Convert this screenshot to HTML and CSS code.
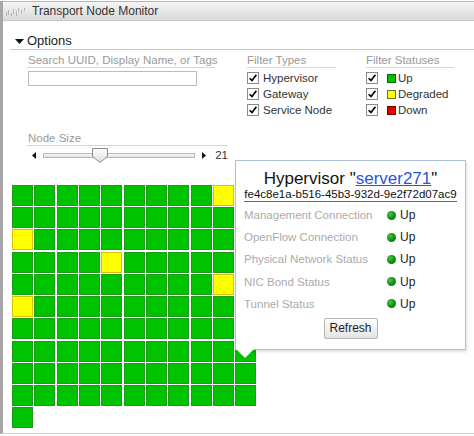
FILE: index.html
```html
<!DOCTYPE html>
<html>
<head>
<meta charset="utf-8">
<title>Transport Node Monitor</title>
<link rel="stylesheet" href="styles.css">
</head>
<body>
<div class="window">
  <div class="titlebar">
    <svg class="grip" width="22" height="10" viewBox="0 0 22 10">
      <g stroke="#b4b4b4" stroke-width="1">
        <line x1="1.5" y1="5" x2="1.5" y2="9"/>
        <line x1="3.5" y1="3" x2="3.5" y2="8"/>
        <line x1="6.5" y1="6" x2="6.5" y2="9"/>
        <line x1="8.5" y1="2" x2="8.5" y2="7"/>
        <line x1="11.5" y1="4" x2="11.5" y2="9"/>
        <line x1="13.5" y1="1" x2="13.5" y2="5"/>
        <line x1="16.5" y1="3" x2="16.5" y2="7"/>
        <line x1="19.5" y1="1" x2="19.5" y2="4"/>
      </g>
    </svg>
    <span class="title">Transport Node Monitor</span>
  </div>

  <div class="opt-head">
    <svg class="tri" width="9" height="5" viewBox="0 0 9 5"><polygon points="0,0 9,0 4.5,5" fill="#111"/></svg>
    <span>Options</span>
  </div>

  <div class="filters">
    <div class="col-search">
      <div class="label label-search">Search UUID, Display Name, or Tags</div>
      <input class="search-input" type="text">
    </div>
    <div class="col-types">
      <div class="label">Filter Types</div>
      <div class="checks">
        <div class="check-row"><span class="cb"><svg width="10" height="10" viewBox="0 0 10 10"><path d="M1.6 5.2 L4 7.6 L8.4 1.8" fill="none" stroke="#000" stroke-width="1.6"/></svg></span>Hypervisor</div>
        <div class="check-row"><span class="cb"><svg width="10" height="10" viewBox="0 0 10 10"><path d="M1.6 5.2 L4 7.6 L8.4 1.8" fill="none" stroke="#000" stroke-width="1.6"/></svg></span>Gateway</div>
        <div class="check-row"><span class="cb"><svg width="10" height="10" viewBox="0 0 10 10"><path d="M1.6 5.2 L4 7.6 L8.4 1.8" fill="none" stroke="#000" stroke-width="1.6"/></svg></span>Service Node</div>
      </div>
    </div>
    <div class="col-status">
      <div class="label">Filter Statuses</div>
      <div class="checks">
        <div class="check-row"><span class="cb cb-status"><svg width="10" height="10" viewBox="0 0 10 10"><path d="M1.6 5.2 L4 7.6 L8.4 1.8" fill="none" stroke="#000" stroke-width="1.6"/></svg></span><span class="sq sq-up"></span>Up</div>
        <div class="check-row"><span class="cb cb-status"><svg width="10" height="10" viewBox="0 0 10 10"><path d="M1.6 5.2 L4 7.6 L8.4 1.8" fill="none" stroke="#000" stroke-width="1.6"/></svg></span><span class="sq sq-deg"></span>Degraded</div>
        <div class="check-row"><span class="cb cb-status"><svg width="10" height="10" viewBox="0 0 10 10"><path d="M1.6 5.2 L4 7.6 L8.4 1.8" fill="none" stroke="#000" stroke-width="1.6"/></svg></span><span class="sq sq-down"></span>Down</div>
      </div>
    </div>
  </div>

  <div class="nodesize">
    <div class="label label-search">Node Size</div>
    <div class="slider">
      <svg class="arr-left" width="4" height="7" viewBox="0 0 4 7"><polygon points="4,0 4,7 0,3.5" fill="#111"/></svg>
      <div class="track">
        <svg class="thumb" width="16" height="15" viewBox="0 0 16 15">
          <defs><linearGradient id="tg" x1="0" y1="0" x2="0" y2="1"><stop offset="0" stop-color="#ffffff"/><stop offset="1" stop-color="#dcdcdc"/></linearGradient></defs>
          <polygon points="0.5,0.5 15.5,0.5 15.5,8.5 8,14.5 0.5,8.5" fill="url(#tg)" stroke="#8c8c8c"/>
        </svg>
      </div>
      <svg class="arr-right" width="4" height="7" viewBox="0 0 4 7"><polygon points="0,0 0,7 4,3.5" fill="#111"/></svg>
      <span class="size-val">21</span>
    </div>
  </div>

  <div class="grid">
    <i class="c"></i><i class="c"></i><i class="c"></i><i class="c"></i><i class="c"></i><i class="c"></i><i class="c"></i><i class="c"></i><i class="c"></i><i class="c y"></i><i class="c"></i>
    <i class="c"></i><i class="c"></i><i class="c"></i><i class="c"></i><i class="c"></i><i class="c"></i><i class="c"></i><i class="c"></i><i class="c"></i><i class="c"></i><i class="c"></i>
    <i class="c y"></i><i class="c"></i><i class="c"></i><i class="c"></i><i class="c"></i><i class="c"></i><i class="c"></i><i class="c"></i><i class="c"></i><i class="c"></i><i class="c"></i>
    <i class="c"></i><i class="c"></i><i class="c"></i><i class="c"></i><i class="c y"></i><i class="c"></i><i class="c"></i><i class="c"></i><i class="c"></i><i class="c"></i><i class="c"></i>
    <i class="c"></i><i class="c"></i><i class="c"></i><i class="c"></i><i class="c"></i><i class="c"></i><i class="c"></i><i class="c"></i><i class="c"></i><i class="c y"></i><i class="c"></i>
    <i class="c y"></i><i class="c"></i><i class="c"></i><i class="c"></i><i class="c"></i><i class="c"></i><i class="c"></i><i class="c"></i><i class="c"></i><i class="c"></i><i class="c"></i>
    <i class="c"></i><i class="c"></i><i class="c"></i><i class="c"></i><i class="c"></i><i class="c"></i><i class="c"></i><i class="c"></i><i class="c"></i><i class="c"></i><i class="c"></i>
    <i class="c"></i><i class="c"></i><i class="c"></i><i class="c"></i><i class="c"></i><i class="c"></i><i class="c"></i><i class="c"></i><i class="c"></i><i class="c"></i><i class="c"></i>
    <i class="c"></i><i class="c"></i><i class="c"></i><i class="c"></i><i class="c"></i><i class="c"></i><i class="c"></i><i class="c"></i><i class="c"></i><i class="c"></i><i class="c"></i>
    <i class="c"></i><i class="c"></i><i class="c"></i><i class="c"></i><i class="c"></i><i class="c"></i><i class="c"></i><i class="c"></i><i class="c"></i><i class="c"></i><i class="c"></i>
    <i class="c"></i>
  </div>
</div>

<div class="popup">
  <div class="pop-title">Hypervisor "<a href="#">server271</a>"</div>
  <div class="pop-uuid-wrap"><span class="pop-uuid">fe4c8e1a-b516-45b3-932d-9e2f72d07ac9</span></div>
  <div class="stat-rows">
    <div class="stat-row"><span class="stat-name">Management Connection</span><span class="dot"></span><span class="up">Up</span></div>
    <div class="stat-row"><span class="stat-name">OpenFlow Connection</span><span class="dot"></span><span class="up">Up</span></div>
    <div class="stat-row"><span class="stat-name">Physical Network Status</span><span class="dot"></span><span class="up">Up</span></div>
    <div class="stat-row"><span class="stat-name">NIC Bond Status</span><span class="dot"></span><span class="up">Up</span></div>
    <div class="stat-row"><span class="stat-name">Tunnel Status</span><span class="dot"></span><span class="up">Up</span></div>
  </div>
  <div class="refresh-wrap"><button class="refresh" type="button">Refresh</button></div>
</div>
</body>
</html>
```

FILE: styles.css
```css
html, body {
  margin: 0;
  padding: 0;
  background: #ffffff;
}
body {
  position: relative;
  font-family: "Liberation Sans", Arial, sans-serif;
  color: #222;
}

.window {
  margin-top: 1px;
  height: 433px;
  box-sizing: border-box;
  border-top: 1px solid #b5b5b5;
  border-left: 3px solid #a6a6a6;
  border-bottom: 1px solid #cdcdcd;
  overflow: hidden;
}

.titlebar {
  height: 17px;
  padding-top: 1px;
  border-bottom: 1px solid #c6c6c6;
  background: linear-gradient(#f5f5f5, #d9d9d9);
  display: flex;
  align-items: center;
  font-size: 12px;
  line-height: 17px;
  color: #333;
}
.grip {
  margin-left: 2px;
  display: block;
}
.title {
  margin-left: 5px;
}

.opt-head {
  margin: 12px 0 0 7px;
  height: 16px;
  line-height: 16px;
  border-bottom: 1px solid #c8c8c8;
  font-size: 13px;
  color: #222;
  display: flex;
  align-items: center;
}
.tri {
  margin-left: 5px;
  margin-right: 3px;
  display: block;
}

.filters {
  display: flex;
  margin: 4px 0 0 24px;
}
.col-search { width: 188px; }
.col-types { width: 89px; margin-left: 32px; }
.col-status { width: 88px; margin-left: 30px; }

.label {
  font-size: 11.5px;
  line-height: 13px;
  color: #9a9a9a;
  border-bottom: 1px solid #d6d6d6;
  white-space: nowrap;
}
.label-search { padding-left: 1px; }

.search-input {
  display: block;
  margin: 3px 0 0 1px;
  width: 169px;
  height: 15px;
  box-sizing: border-box;
  padding: 0;
  border: 1px solid #bcbcbc;
  background: #fff;
}

.checks { margin-top: 2px; }
.check-row {
  height: 16px;
  display: flex;
  align-items: center;
  font-size: 11.5px;
  color: #333;
  white-space: nowrap;
}
.cb {
  width: 12px;
  height: 12px;
  box-sizing: border-box;
  border: 1px solid #8a8a8a;
  background: #fff;
  margin-right: 4px;
  display: flex;
  align-items: center;
  justify-content: center;
}
.cb svg { display: block; }
.cb-status { margin-right: 9px; }
.sq {
  width: 9px;
  height: 9px;
  box-sizing: border-box;
  margin-right: 2px;
}
.sq-up { background: #00c000; border: 1px solid #0a5f0a; }
.sq-deg { background: #ffff00; border: 1px solid #6f6f2a; }
.sq-down { background: #e00000; border: 1px solid #7a0000; }

.nodesize {
  margin: 14px 0 0 24px;
  width: 201px;
}
.slider {
  display: flex;
  align-items: center;
  height: 16px;
  margin-top: 1px;
}
.arr-left { display: block; margin-left: 5px; }
.track {
  position: relative;
  margin-left: 7px;
  width: 153px;
  height: 5px;
  box-sizing: border-box;
  border: 1px solid #b9b9b9;
  background: linear-gradient(#f8f8f8, #e2e2e2);
}
.thumb {
  position: absolute;
  left: 48px;
  top: -6px;
  display: block;
}
.arr-right { display: block; margin-left: 7px; }
.size-val {
  margin-left: 9px;
  font-size: 11.5px;
  color: #333;
}

.grid {
  display: grid;
  grid-template-columns: repeat(11, 21px);
  grid-auto-rows: 21px;
  column-gap: 1.33px;
  row-gap: 1.22px;
  margin: 22px 0 0 9px;
}
.c {
  display: block;
  width: 21px;
  height: 21px;
  box-sizing: border-box;
  background: #00c300;
  border: 1px solid #1f9a1f;
}
.c.y {
  background: #ffff00;
  border-color: #d6c400;
}

.popup {
  position: absolute;
  left: 235px;
  top: 160px;
  width: 231px;
  height: 190px;
  box-sizing: border-box;
  border: 1px solid #a9bfdc;
  background: #fff;
  padding: 9px 8px 0 8px;
  box-shadow: 1px 2px 3px rgba(0, 0, 0, 0.12);
}
.popup::after {
  content: "";
  position: absolute;
  left: 0;
  top: 100%;
  width: 0;
  height: 0;
  border-left: 9px solid transparent;
  border-right: 9px solid transparent;
  border-top: 9px solid #ffffff;
}
.pop-title {
  text-align: center;
  font-size: 17px;
  line-height: 18px;
  color: #111;
  white-space: nowrap;
}
.pop-title a {
  color: #2d55d9;
  text-decoration: underline;
}
.pop-uuid-wrap {
  display: flex;
  justify-content: center;
  white-space: nowrap;
}
.pop-uuid {
  display: block;
  font-size: 11.5px;
  line-height: 12px;
  padding-bottom: 1px;
  border-bottom: 1px solid #666;
  color: #111;
}
.stat-rows { margin-top: 2px; }
.stat-row {
  display: flex;
  align-items: center;
  height: 22.2px;
}
.stat-name {
  width: 143px;
  font-size: 11.5px;
  color: #ababab;
  white-space: nowrap;
}
.dot {
  width: 9px;
  height: 9px;
  border-radius: 50%;
  background: radial-gradient(circle at 35% 35%, #45c645, #138a13 55%, #0a620a);
  margin-right: 4px;
}
.up {
  font-size: 12px;
  color: #222;
}
.refresh-wrap {
  display: flex;
  justify-content: center;
  margin-top: 3px;
}
.refresh {
  display: block;
  width: 54px;
  height: 21px;
  padding: 0;
  box-sizing: border-box;
  border: 1px solid #b4b4b4;
  border-radius: 2px;
  background: linear-gradient(#fdfdfd, #e4e4e4);
  font-family: "Liberation Sans", Arial, sans-serif;
  font-size: 12px;
  color: #222;
}
```
